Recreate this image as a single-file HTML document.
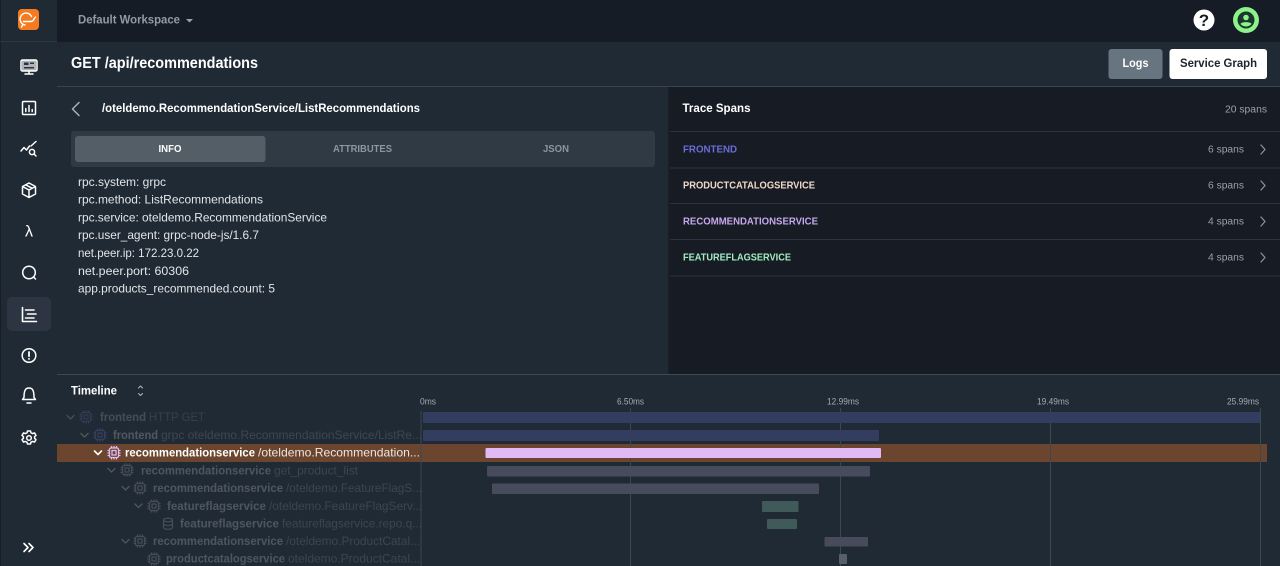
<!DOCTYPE html>
<html><head><meta charset="utf-8"><title>Trace</title>
<style>
html,body{margin:0;padding:0;background:#202a35;width:1280px;height:566px;overflow:hidden}
svg{display:block}
text{font-family:"Liberation Sans",sans-serif}
.b{font-weight:700}
.ic{fill:none;stroke:#fff;stroke-width:1.5;stroke-linecap:round;stroke-linejoin:round}
.ch{fill:none;stroke:#fff;stroke-width:1.4;stroke-linecap:round;stroke-linejoin:round}
.kv{font-size:12px;fill:#e2e5e8}
.rb{font-size:12px;font-weight:700;fill:#fff}
.rn{font-size:12px;fill:#aab0b6}
.tl{font-size:9px;fill:#a4abb2}
.sc{font-size:10px;fill:#9aa1a8}
.sv{font-size:10px;font-weight:700}
</style></head>
<body>
<svg width="1280" height="566" viewBox="0 0 1280 566" xmlns="http://www.w3.org/2000/svg">
<rect width="1280" height="566" fill="#202a35"/>
<rect x="0" y="0" width="1" height="566" fill="#171d26"/>
<!-- top bar -->
<rect x="57" y="0" width="1223" height="42" fill="#161c25"/>
<rect x="0" y="41" width="57" height="1" fill="#2d3742"/>
<!-- logo -->
<rect x="18" y="9" width="21" height="21" rx="4" fill="#f47b20"/>
<path d="M31.500 16.500a6 6 0 1 0-6.500 8.500M23 24.500l-1.500 2.500M23.500 21.500h7c2 0 3-1 3.500-2.500l1.500-2" fill="none" stroke="#fff" stroke-width="1.400" stroke-linecap="round" stroke-linejoin="round"/>
<text x="78" y="23.500" font-size="12" class="b" fill="#929aa3" textLength="102" lengthAdjust="spacingAndGlyphs">Default Workspace</text>
<path d="M186 19h7l-3.500 3.500z" fill="#9aa2ab"/>
<!-- help -->
<circle cx="1204" cy="20" r="10.500" fill="#fff"/>
<text x="1204" y="26" font-size="17" class="b" fill="#161c25" text-anchor="middle">?</text>
<!-- avatar -->
<circle cx="1246" cy="20" r="13" fill="#8ef28a"/>
<circle cx="1246" cy="20" r="8.500" fill="#17382a"/>
<circle cx="1246" cy="17.500" r="2.800" fill="#8ef28a"/>
<path d="M1240.500 24c1-2.500 10-2.500 11 0-1.500 1.800-3.500 2.500-5.500 2.500s-4-.7-5.500-2.500z" fill="#8ef28a"/>
<!-- header -->
<text x="71" y="68" font-size="15.500" class="b" fill="#fff" textLength="187" lengthAdjust="spacingAndGlyphs">GET /api/recommendations</text>
<rect x="1108.500" y="49" width="54" height="30" rx="3" fill="#66757f"/>
<text x="1135.500" y="67" font-size="12" class="b" fill="#fff" text-anchor="middle" textLength="26" lengthAdjust="spacingAndGlyphs">Logs</text>
<rect x="1169.500" y="49" width="97.500" height="30" rx="3" fill="#fff"/>
<text x="1180" y="67" font-size="12" class="b" fill="#20262d" textLength="77" lengthAdjust="spacingAndGlyphs">Service Graph</text>
<rect x="57" y="86" width="1223" height="1" fill="#3a444f"/>
<!-- right panel -->
<rect x="669" y="87" width="611" height="287" fill="#161b24"/>
<rect x="668" y="87" width="1" height="287" fill="#1a2029"/>
<text x="682.500" y="112" font-size="11.500" class="b" fill="#fff" textLength="68" lengthAdjust="spacingAndGlyphs">Trace Spans</text>
<text x="1225" y="112.500" class="sc" textLength="42" lengthAdjust="spacingAndGlyphs">20 spans</text>
<g fill="#2d343e">
<rect x="670" y="131" width="610" height="1"/>
<rect x="670" y="167.500" width="610" height="1"/>
<rect x="670" y="203" width="610" height="1"/>
<rect x="670" y="239" width="610" height="1"/>
<rect x="670" y="275.500" width="610" height="1"/>
</g>
<text x="683" y="152.500" class="sv" fill="#6a6ddb" textLength="54" lengthAdjust="spacingAndGlyphs">FRONTEND</text>
<text x="683" y="188.500" class="sv" fill="#f0d9c8" textLength="132" lengthAdjust="spacingAndGlyphs">PRODUCTCATALOGSERVICE</text>
<text x="683" y="224.500" class="sv" fill="#c6a8ec" textLength="135" lengthAdjust="spacingAndGlyphs">RECOMMENDATIONSERVICE</text>
<text x="683" y="260.500" class="sv" fill="#a3ecc0" textLength="108" lengthAdjust="spacingAndGlyphs">FEATUREFLAGSERVICE</text>
<text x="1208" y="152.500" class="sc" textLength="36" lengthAdjust="spacingAndGlyphs">6 spans</text>
<text x="1208" y="188.500" class="sc" textLength="36" lengthAdjust="spacingAndGlyphs">6 spans</text>
<text x="1208" y="224.500" class="sc" textLength="36" lengthAdjust="spacingAndGlyphs">4 spans</text>
<text x="1208" y="260.500" class="sc" textLength="36" lengthAdjust="spacingAndGlyphs">4 spans</text>
<path d="M1261 145l4 4.500-4 4.500M1261 181l4 4.500-4 4.500M1261 217l4 4.500-4 4.500M1261 253l4 4.500-4 4.500" fill="none" stroke="#8f959c" stroke-width="1.200" stroke-linecap="round" stroke-linejoin="round"/>
<!-- left detail -->
<path d="M79 102.500l-6.500 6.500 6.500 6.500" fill="none" stroke="#a8aeb5" stroke-width="1.500" stroke-linecap="round" stroke-linejoin="round"/>
<text x="102" y="112" font-size="11.500" class="b" fill="#fff" textLength="318" lengthAdjust="spacingAndGlyphs">/oteldemo.RecommendationService/ListRecommendations</text>
<rect x="71" y="131" width="584" height="36" rx="3" fill="#303a45"/>
<rect x="75" y="136" width="190.500" height="26" rx="3" fill="#535e67"/>
<text x="158.500" y="152" font-size="10" class="b" fill="#fff" textLength="23" lengthAdjust="spacingAndGlyphs">INFO</text>
<text x="333" y="152" font-size="10" class="b" fill="#8d959d" textLength="59" lengthAdjust="spacingAndGlyphs">ATTRIBUTES</text>
<text x="543" y="152" font-size="10" class="b" fill="#8d959d" textLength="26" lengthAdjust="spacingAndGlyphs">JSON</text>
<text x="78" y="186" class="kv" textLength="88" lengthAdjust="spacingAndGlyphs">rpc.system: grpc</text>
<text x="78" y="203.500" class="kv" textLength="185" lengthAdjust="spacingAndGlyphs">rpc.method: ListRecommendations</text>
<text x="78" y="221.500" class="kv" textLength="249" lengthAdjust="spacingAndGlyphs">rpc.service: oteldemo.RecommendationService</text>
<text x="78" y="239" class="kv" textLength="181" lengthAdjust="spacingAndGlyphs">rpc.user_agent: grpc-node-js/1.6.7</text>
<text x="78" y="257" class="kv" textLength="121" lengthAdjust="spacingAndGlyphs">net.peer.ip: 172.23.0.22</text>
<text x="78" y="275" class="kv" textLength="111" lengthAdjust="spacingAndGlyphs">net.peer.port: 60306</text>
<text x="78" y="292.500" class="kv" textLength="197" lengthAdjust="spacingAndGlyphs">app.products_recommended.count: 5</text>
<!-- timeline -->
<rect x="57" y="374" width="1223" height="1" fill="#3f4954"/>
<text x="71" y="394.500" font-size="11.500" class="b" fill="#fff" textLength="46" lengthAdjust="spacingAndGlyphs">Timeline</text>
<path d="M138.500 388l2-2 2 2M138.500 393.500l2 2 2-2" fill="none" stroke="#b4bac0" stroke-width="1" stroke-linecap="round" stroke-linejoin="round"/>
<text x="420" y="404.500" class="tl" textLength="16" lengthAdjust="spacingAndGlyphs">0ms</text>
<text x="617" y="404.500" class="tl" textLength="27" lengthAdjust="spacingAndGlyphs">6.50ms</text>
<text x="827" y="404.500" class="tl" textLength="32" lengthAdjust="spacingAndGlyphs">12.99ms</text>
<text x="1037" y="404.500" class="tl" textLength="32" lengthAdjust="spacingAndGlyphs">19.49ms</text>
<text x="1227" y="404.500" class="tl" textLength="32" lengthAdjust="spacingAndGlyphs">25.99ms</text>
<!-- highlight row -->
<rect x="57" y="444" width="1210" height="18" fill="#6b452e"/>
<!-- grid -->
<g fill="#3d4752">
<rect x="420.500" y="411" width="1" height="155"/>
<rect x="630" y="408" width="1" height="158"/>
<rect x="840" y="408" width="1" height="158"/>
<rect x="1050" y="408" width="1" height="158"/>
<rect x="1260" y="408" width="1" height="158"/>
</g>
<!-- bars -->
<rect x="423" y="412" width="837" height="11" fill="#333d60"/>
<rect x="423" y="430" width="456" height="11" rx="1" fill="#333d60"/>
<rect x="485.500" y="448" width="395.500" height="10" rx="1" fill="#e0b9f5"/>
<rect x="487" y="466" width="383" height="10.500" rx="1" fill="#474b5c"/>
<rect x="492" y="483.500" width="327" height="10.500" rx="1" fill="#474b5c"/>
<rect x="762" y="501" width="36.500" height="11" rx="1" fill="#3f5a58"/>
<rect x="767" y="519" width="30" height="10" rx="1" fill="#3f5a58"/>
<rect x="824.500" y="537" width="43.500" height="9.500" rx="1" fill="#474b5c"/>
<rect x="839" y="554" width="8" height="10" rx="1" fill="#585e6a"/>
<defs><g id="chip" fill="none" stroke-width="1.200"><rect x="-4.500" y="-4.500" width="9" height="9" rx="1.500"/><rect x="-2" y="-2" width="4" height="4"/><path d="M-2.500-6.500v2M0-6.500v2M2.500-6.500v2M-2.500 4.500v2M0 4.500v2M2.500 4.500v2M-6.500-2.500h2M-6.500 0h2M-6.500 2.500h2M4.500-2.500h2M4.500 0h2M4.500 2.500h2"/></g></defs>
<!-- faded rows -->
<g opacity=".16">
<path class="ch" d="M67 415.500l3.500 3.500 3.500-3.500"/>
<use href="#chip" x="86" y="417" stroke="#8a94f0"/>
<text x="100" y="421" class="rb" textLength="46" lengthAdjust="spacingAndGlyphs">frontend</text>
<text x="149" y="421" class="rn" textLength="56" lengthAdjust="spacingAndGlyphs">HTTP GET</text>
</g>
<g opacity=".21">
<path class="ch" d="M81 433.500l3.500 3.500 3.500-3.500"/>
<use href="#chip" x="100" y="435" stroke="#8a94f0"/>
<text x="113" y="439" class="rb" textLength="45" lengthAdjust="spacingAndGlyphs">frontend</text>
<text x="161" y="439" class="rn" textLength="261" lengthAdjust="spacingAndGlyphs">grpc oteldemo.RecommendationService/ListRe...</text>
</g>
<!-- selected row -->
<path d="M94.500 451l3.500 3.500 3.500-3.500" fill="none" stroke="#fff" stroke-width="1.600" stroke-linecap="round" stroke-linejoin="round"/>
<g fill="none" stroke="#e0b9f5" stroke-width="1.300">
<rect x="109.500" y="448" width="9" height="9.500" rx="1.500"/><rect x="112" y="450.500" width="4" height="4.500"/>
<path d="M111.500 446v2M114 446v2M116.500 446v2M111.500 457.500v2M114 457.500v2M116.500 457.500v2M107.500 450.500h2M107.500 453h2M107.500 455.500h2M118.500 450.500h2M118.500 453h2M118.500 455.500h2"/>
</g>
<text x="125" y="456.500" class="rb" textLength="130" lengthAdjust="spacingAndGlyphs">recommendationservice</text>
<text x="258" y="456.500" font-size="12" fill="#ece6e2" textLength="162" lengthAdjust="spacingAndGlyphs">/oteldemo.Recommendation...</text>
<g opacity=".2" stroke="#d8d8e0">
<path class="ch" d="M108 468.500l3.500 3.500 3.500-3.500"/>
<use href="#chip" x="127" y="470"/>
<path class="ch" d="M122 486.500l3.500 3.500 3.500-3.500"/>
<use href="#chip" x="140" y="488"/>
<path class="ch" d="M135 504l3.500 3.500 3.500-3.500"/>
<use href="#chip" x="154" y="506"/>
<g fill="none" stroke-width="1.200"><ellipse cx="168" cy="520" rx="4.500" ry="1.800"/><path d="M163.500 520v7.500c0 1 2 1.800 4.500 1.800s4.500-.8 4.500-1.800V520M163.500 523.700c0 1 2 1.800 4.500 1.800s4.500-.8 4.500-1.800"/></g>
<path class="ch" d="M122 539.500l3.500 3.500 3.500-3.500"/>
<use href="#chip" x="140" y="541"/>
<use href="#chip" x="154" y="559"/>
</g>
<g opacity=".2">
<text x="141" y="474.500" class="rb" textLength="130" lengthAdjust="spacingAndGlyphs">recommendationservice</text>
<text x="274" y="474.500" class="rn" textLength="84" lengthAdjust="spacingAndGlyphs">get_product_list</text>
<text x="153" y="492" class="rb" textLength="130" lengthAdjust="spacingAndGlyphs">recommendationservice</text>
<text x="286" y="492" class="rn" textLength="136" lengthAdjust="spacingAndGlyphs">/oteldemo.FeatureFlagS...</text>
<text x="167" y="510" class="rb" textLength="99" lengthAdjust="spacingAndGlyphs">featureflagservice</text>
<text x="269" y="510" class="rn" textLength="153" lengthAdjust="spacingAndGlyphs">/oteldemo.FeatureFlagServ...</text>
<text x="180" y="527.500" class="rb" textLength="99" lengthAdjust="spacingAndGlyphs">featureflagservice</text>
<text x="282" y="527.500" class="rn" textLength="140" lengthAdjust="spacingAndGlyphs">featureflagservice.repo.q...</text>
<text x="153" y="545" class="rb" textLength="130" lengthAdjust="spacingAndGlyphs">recommendationservice</text>
<text x="286" y="545" class="rn" textLength="134" lengthAdjust="spacingAndGlyphs">/oteldemo.ProductCatal...</text>
<text x="166" y="562.500" class="rb" textLength="119" lengthAdjust="spacingAndGlyphs">productcatalogservice</text>
<text x="288" y="562.500" class="rn" textLength="132" lengthAdjust="spacingAndGlyphs">oteldemo.ProductCatal...</text>
</g>
<!-- sidebar -->
<rect x="7" y="297" width="44" height="34" rx="5" fill="#2d3542"/>
<rect x="22" y="60.500" width="14" height="10" fill="#aeb4ba"/>
<path d="M24 62.500h4.500v2.500H24zM30 62.500h4v1.500h-4zM24 67h10v1.500H24z" fill="#2a333e"/>
<g class="ic">
<path d="M22.500 60h13c.8 0 1.500.7 1.500 1.500v8c0 .8-.7 1.500-1.500 1.500h-13c-.8 0-1.500-.7-1.500-1.500v-8c0-.8.700-1.500 1.500-1.500zM29 71.500v2M25 74h8"/>
<rect x="22.500" y="101.500" width="13" height="13" rx="1"/>
<path d="M25.800 111.500v-3M29 111.500v-6M32.200 111.500v-2"/>
<path d="M21 151l3-3.500 2.500 2.500 3-4M31 146l5-4.500"/>
<circle cx="32" cy="152" r="2.600"/><path d="M34 154l2 2"/>
<path d="M29 183l6.500 3.500v7.500L29 197.500 22.500 194v-7.500zM22.500 186.500L29 190l6.500-3.500M29 190v7.500M25.700 184.800l6.500 3.500"/>
<circle cx="29" cy="272.500" r="6.300"/><path d="M33.500 277l2 2"/>
<path d="M22.500 307.500v14h14M25.500 310h8.500M27.500 314h8.500M25.500 318h8.500" stroke-width="1.600"/>
<circle cx="29" cy="355.500" r="6.800"/>
<path d="M29 352v4.200M29 358.800v.2" stroke-width="1.800"/>
<path d="M24 397.500c0-8 2-9.500 5-9.500s5 1.500 5 9.500l1.500 2h-13zM27 403h4"/>
<circle cx="29" cy="438" r="2.300"/>
<path d="M27.500 431h3l.5 1.800 1.700.8 1.800-.7 1.500 2.500-1.400 1.200v1.800l1.400 1.200-1.500 2.500-1.800-.7-1.700.8-.5 1.800h-3l-.5-1.800-1.700-.8-1.800.7-1.500-2.500 1.400-1.200v-1.800l-1.400-1.200 1.500-2.500 1.800.7 1.700-.8z"/>
<path d="M24 543.500l4 4-4 4M29 543.500l4 4-4 4" stroke-width="1.600"/>
</g>
<text x="29" y="236.500" font-size="16" fill="#fff" text-anchor="middle">λ</text>
</svg>
</body></html>
